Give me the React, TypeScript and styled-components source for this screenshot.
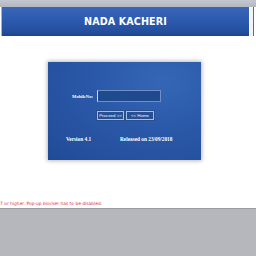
import React from "react";
import styled, { createGlobalStyle } from "styled-components";

const Global = createGlobalStyle`
  html, body { margin: 0; padding: 0; background: #ffffff; }
  body { width: 256px; height: 256px; overflow: hidden; }
  #root { width: 256px; height: 256px; display: flex; flex-direction: column; }
`;

const TopStrip = styled.div`
  height: 7px;
  background: linear-gradient(#c4c7cf, #b3b7c2);
  flex: none;
`;

const HeaderRow = styled.div`
  display: flex;
  height: 29px;
  flex: none;
`;

const HeaderBar = styled.div`
  width: 247px;
  margin-left: 1px;
  border-left: 1px solid #9fb4dd;
  background: linear-gradient(#3a66b8 0%, #2c5aae 45%, #244f9e 85%, #1d448c 100%);
  display: flex;
  align-items: center;
  justify-content: center;
  color: #ffffff;
  font-family: "DejaVu Sans", Verdana, sans-serif;
  font-weight: bold;
  font-size: 9.6px;
  letter-spacing: 0.1px;
`;

const HeaderEdge = styled.div`
  width: 3px;
  margin-left: 1px;
  border-right: 1px solid #5a6a8c;
  background: #f2f4f8;
`;

const Body = styled.div`
  flex: 1;
  display: flex;
  flex-direction: column;
  padding-top: 26px;
`;

const Panel = styled.div`
  width: 153px;
  height: 98px;
  margin-left: 48px;
  box-sizing: border-box;
  background: radial-gradient(ellipse at 75% 20%, #3566b6 0%, #2a58a8 45%, #214b96 100%);
  box-shadow: 0 0 4px 1px rgba(0, 0, 0, 0.28);
  display: flex;
  flex-direction: column;
  padding-top: 28px;
  font-family: "Liberation Serif", "Times New Roman", serif;
  color: #ffffff;
`;

const FormRow = styled.div`
  display: flex;
  align-items: center;
  height: 12px;
`;

const Label = styled.div`
  width: 45px;
  text-align: right;
  font-size: 4.6px;
  font-weight: bold;
  margin-right: 4px;
`;

const Input = styled.div`
  width: 64px;
  height: 12px;
  box-sizing: border-box;
  background: #1f4a8e;
  border: 1px solid #6f8fc4;
  border-left: 1px solid #cfd9ec;
`;

const ButtonRow = styled.div`
  display: flex;
  gap: 2px;
  margin-top: 9px;
  padding-left: 49px;
`;

const Button = styled.div<{ $w: number }>`
  width: ${(p) => p.$w}px;
  height: 9px;
  box-sizing: border-box;
  border: 1px solid #9cc0e4;
  outline: 1px solid #2a4f8c;
  background: #264f96;
  display: flex;
  align-items: center;
  justify-content: center;
  font-family: "Liberation Sans", Arial, sans-serif;
  font-size: 4.4px;
  color: #f2f6fc;
`;

const InfoRow = styled.div`
  display: flex;
  margin-top: 16px;
  padding-left: 18px;
  font-size: 5.3px;
  font-weight: bold;
`;

const Version = styled.div`
  width: 54px;
`;

const Notice = styled.div`
  margin-top: 41px;
  white-space: nowrap;
  color: #d8383a;
  font-family: "DejaVu Sans", Verdana, sans-serif;
  font-size: 4.4px;
  height: 6px;
`;

const BottomArea = styled.div`
  margin-top: 1px;
  flex: 1;
  border-top: 1px solid #9a9ca2;
  background: #b5b7bd;
`;

export default function App() {
  return (
    <>
      <Global />
      <TopStrip />
      <HeaderRow>
        <HeaderBar>NADA KACHERI</HeaderBar>
        <HeaderEdge />
      </HeaderRow>
      <Body>
        <Panel>
          <FormRow>
            <Label>MobileNo:</Label>
            <Input />
          </FormRow>
          <ButtonRow>
            <Button $w={27}>Proceed &gt;&gt;</Button>
            <Button $w={28}>&lt;&lt; Home</Button>
          </ButtonRow>
          <InfoRow>
            <Version>Version 4.1</Version>
            <div>Released on 23/09/2018</div>
          </InfoRow>
        </Panel>
        <Notice>7 or higher. Pop-up blocker has to be disabled.</Notice>
        <BottomArea />
      </Body>
    </>
  );
}
